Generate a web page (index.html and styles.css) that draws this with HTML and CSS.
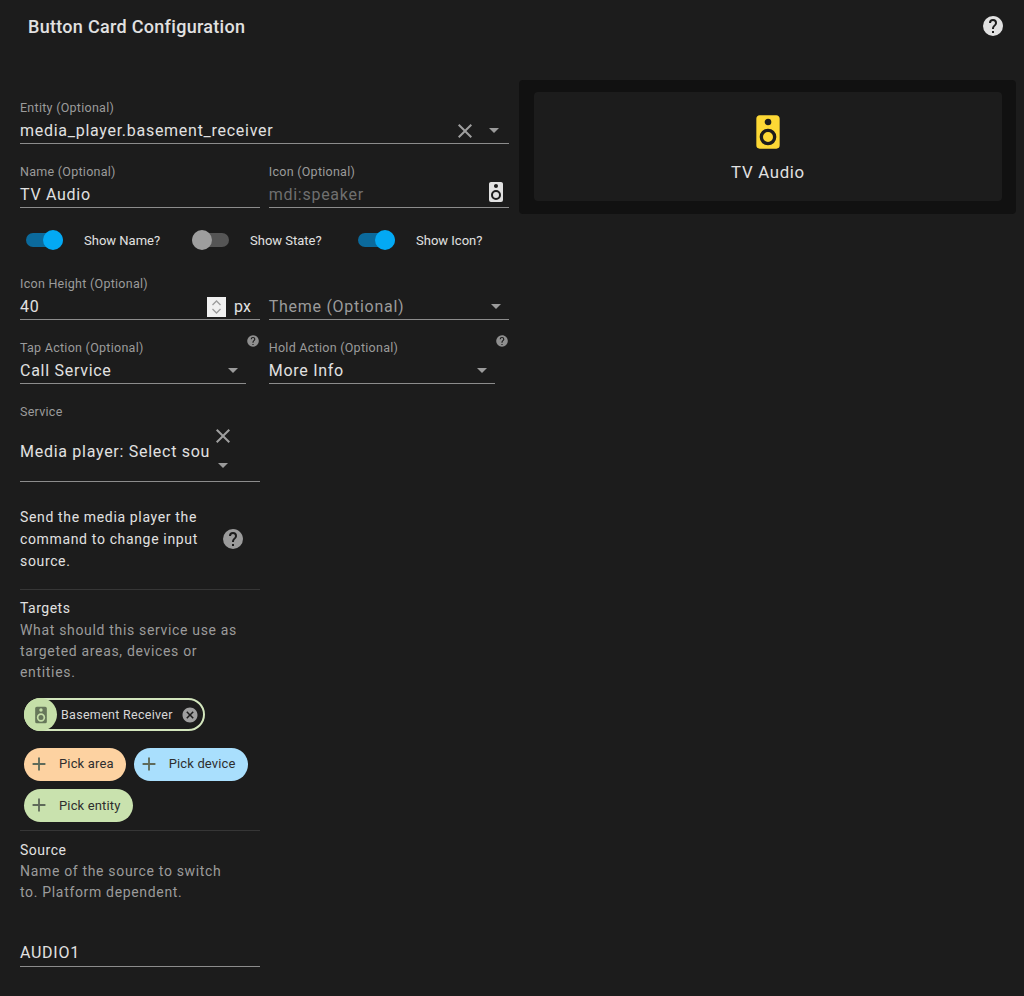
FILE: index.html
```html
<!DOCTYPE html>
<html lang="en">
<head>
<meta charset="utf-8">
<title>Button Card Configuration</title>
<link rel="stylesheet" href="styles.css">
</head>
<body>
<svg class="defs" width="0" height="0" aria-hidden="true">
  <defs>
    <path id="speaker" d="M12,12A3,3 0 0,0 9,15A3,3 0 0,0 12,18A3,3 0 0,0 15,15A3,3 0 0,0 12,12M12,20A5,5 0 0,1 7,15A5,5 0 0,1 12,10A5,5 0 0,1 17,15A5,5 0 0,1 12,20M12,4A2,2 0 0,1 14,6A2,2 0 0,1 12,8C10.89,8 10,7.1 10,6C10,4.89 10.89,4 12,4M17,2H7C5.89,2 5,2.89 5,4V20A2,2 0 0,0 7,22H17A2,2 0 0,0 19,20V4C19,2.89 18.1,2 17,2Z"/>
    <path id="help" d="M15.07,11.25L14.17,12.17C13.45,12.89 13,13.5 13,15H11V14.5C11,13.39 11.45,12.39 12.17,11.67L13.41,10.41C13.78,10.05 14,9.55 14,9C14,7.89 13.1,7 12,7A2,2 0 0,0 10,9H8A4,4 0 0,1 12,5A4,4 0 0,1 16,9C16,9.88 15.64,10.67 15.07,11.25M13,19H11V17H13M12,2A10,10 0 0,0 2,12A10,10 0 0,0 12,22A10,10 0 0,0 22,12C22,6.47 17.5,2 12,2Z"/>
    <path id="close" d="M19,6.41L17.59,5L12,10.59L6.41,5L5,6.41L10.59,12L5,17.59L6.41,19L12,13.41L17.59,19L19,17.59L13.41,12L19,6.41Z"/>
    <path id="plus" d="M19,13H13V19H11V13H5V11H11V5H13V11H19V13Z"/>
    <path id="close-circle" d="M12,2C17.53,2 22,6.47 22,12C22,17.53 17.53,22 12,22C6.47,22 2,17.53 2,12C2,6.47 6.47,2 12,2M15.59,7L12,10.59L8.41,7L7,8.41L10.59,12L7,15.59L8.41,17L12,13.41L15.59,17L17,15.59L13.41,12L17,8.41L15.59,7Z"/>
  </defs>
</svg>
<header class="top">
  <h1>Button Card Configuration</h1>
  <svg class="top-help" viewBox="0 0 24 24"><use href="#help"/></svg>
</header>
<main class="layout">
  <section class="form">
    <div class="field">
      <span class="label">Entity (Optional)</span>
      <div class="value-row">
        <span class="value grow">media_player.basement_receiver</span>
        <svg class="x-icon" viewBox="0 0 24 24"><use href="#close"/></svg>
        <span class="caret entity-caret"></span>
      </div>
    </div>
    <div class="row">
      <div class="field">
        <span class="label">Name (Optional)</span>
        <div class="value-row"><span class="value grow">TV Audio</span></div>
      </div>
      <div class="field">
        <span class="label">Icon (Optional)</span>
        <div class="value-row">
          <span class="value grow placeholder">mdi:speaker</span>
          <svg class="field-icon" viewBox="0 0 24 24"><use href="#speaker"/></svg>
        </div>
      </div>
    </div>
    <div class="switches">
      <div class="switch-item"><span class="switch on"><i></i></span><span class="switch-label">Show Name?</span></div>
      <div class="switch-item"><span class="switch"><i></i></span><span class="switch-label">Show State?</span></div>
      <div class="switch-item"><span class="switch on"><i></i></span><span class="switch-label">Show Icon?</span></div>
    </div>
    <div class="row">
      <div class="field">
        <span class="label">Icon Height (Optional)</span>
        <div class="value-row">
          <span class="value grow">40</span>
          <span class="spinner">
            <svg viewBox="0 0 18 20"><path d="M5 8l4-4 4 4M5 12l4 4 4-4"/></svg>
          </span>
          <span class="value unit">px</span>
        </div>
      </div>
      <div class="field">
        <span class="label"></span>
        <div class="value-row">
          <span class="value grow muted">Theme (Optional)</span>
          <span class="caret theme-caret"></span>
        </div>
      </div>
    </div>
    <div class="row">
      <div class="action">
        <div class="field short">
          <span class="label">Tap Action (Optional)</span>
          <div class="value-row"><span class="value grow">Call Service</span><span class="caret"></span></div>
        </div>
        <svg class="action-help" viewBox="0 0 24 24"><use href="#help"/></svg>
      </div>
      <div class="action">
        <div class="field short">
          <span class="label">Hold Action (Optional)</span>
          <div class="value-row"><span class="value grow">More Info</span><span class="caret"></span></div>
        </div>
        <svg class="action-help" viewBox="0 0 24 24"><use href="#help"/></svg>
      </div>
    </div>
    <div class="narrow">
      <div class="service">
        <span class="label">Service</span>
        <div class="service-row">
          <span class="value service-value">Media player: Select sou</span>
          <div class="service-icons">
            <svg class="x-icon" viewBox="0 0 24 24"><use href="#close"/></svg>
            <span class="caret"></span>
          </div>
        </div>
      </div>
      <div class="desc">
        <p>Send the media player the command to change input source.</p>
        <svg class="desc-help" viewBox="0 0 24 24"><use href="#help"/></svg>
      </div>
      <div class="block targets">
        <div class="block-title">Targets</div>
        <p class="block-sub">What should this service use as targeted areas, devices or entities.</p>
        <div class="chip-selected">
          <span class="chip-avatar"><svg viewBox="0 0 24 24"><use href="#speaker"/></svg></span>
          <span class="chip-text">Basement Receiver</span>
          <svg class="chip-remove" viewBox="0 0 24 24"><use href="#close-circle"/></svg>
        </div>
        <div class="picks">
          <span class="pick area"><svg viewBox="0 0 24 24"><use href="#plus"/></svg>Pick area</span>
          <span class="pick device"><svg viewBox="0 0 24 24"><use href="#plus"/></svg>Pick device</span>
          <span class="pick entity"><svg viewBox="0 0 24 24"><use href="#plus"/></svg>Pick entity</span>
        </div>
      </div>
      <div class="block source">
        <div class="block-title">Source</div>
        <p class="block-sub">Name of the source to switch to. Platform dependent.</p>
        <div class="source-input"><span class="value">AUDIO1</span></div>
      </div>
    </div>
  </section>
  <aside class="preview">
    <div class="card">
      <svg class="card-icon" viewBox="0 0 24 24"><use href="#speaker"/></svg>
      <span class="card-name">TV Audio</span>
    </div>
  </aside>
</main>
</body>
</html>
```
FILE: styles.css
```css
* { box-sizing: border-box; }
html, body { margin: 0; padding: 0; }
body {
  width: 1024px;
  height: 996px;
  overflow: hidden;
  background: #1c1c1c;
  color: #e1e1e1;
  font-family: Roboto, "Liberation Sans", sans-serif;
}
p { margin: 0; }
.defs { position: absolute; }

.top {
  height: 52px;
  display: flex;
  align-items: center;
  justify-content: space-between;
  padding: 0 19px 0 28px;
}
.top h1 {
  margin: 0;
  font-size: 18px;
  font-weight: 500;
  letter-spacing: 0.3px;
  color: #e1e1e1;
}
.top-help { width: 24px; height: 24px; fill: #e1e1e1; }

.layout {
  display: flex;
  align-items: flex-start;
  gap: 10px;
  padding: 28px 8px 0 20px;
}
.form { width: 489px; flex: none; padding-top: 16px; }

.row { display: flex; gap: 8.5px; margin-top: 16px; }
.row > * { flex: 1 1 0; min-width: 0; }

.field {
  height: 48px;
  border-bottom: 1px solid #8c8c8c;
  display: flex;
  flex-direction: column;
}
.label {
  display: block;
  height: 24px;
  font-size: 12.5px;
  line-height: 24px;
  letter-spacing: 0.27px;
  color: #9b9b9b;
}
.value-row { display: flex; align-items: center; height: 23px; margin-top: -1px; }
.value {
  font-size: 16px;
  line-height: 23px;
  letter-spacing: 0.72px;
  color: #e1e1e1;
  white-space: nowrap;
}
.grow { flex: 1 1 auto; }
.placeholder { color: #6f6f6f; }
.muted { color: #9b9b9b; }
.unit { margin: 0 9px 0 8px; letter-spacing: 0.2px; }

.x-icon { width: 24px; height: 24px; fill: #9f9f9f; flex: none; }
.caret {
  width: 0; height: 0; flex: none;
  border-left: 5px solid transparent;
  border-right: 5px solid transparent;
  border-top: 5px solid #9b9b9b;
  margin-right: 8px;
}
.entity-caret { margin: 0 10px 0 12px; }
.theme-caret { margin-right: 8px; }
.field-icon { width: 24px; height: 24px; fill: #e1e1e1; flex: none; margin: 0 1px 5px 0; }

.spinner {
  width: 19px; height: 20px; flex: none;
  background: #f0f0f0;
  display: flex;
}
.spinner svg { width: 19px; height: 20px; fill: none; stroke: #9c9c9c; stroke-width: 1.3; }

.switches { height: 64px; display: flex; align-items: center; padding-left: 6px; }
.switches + .row { margin-top: 0; }
.switch-item { display: flex; align-items: center; width: 166px; flex: none; }
.switch {
  position: relative;
  width: 37px; height: 14px;
  border-radius: 7px;
  background: #555;
  flex: none;
}
.switch i {
  position: absolute;
  left: 0; top: -3px;
  width: 20px; height: 20px;
  border-radius: 50%;
  background: #9e9e9e;
}
.switch.on { background: #0b6a9c; }
.switch.on i { left: auto; right: 0; background: #03a9f4; }
.switch-label { margin-left: 21px; font-size: 13px; letter-spacing: 0; color: #e1e1e1; }

.action { position: relative; }
.short { margin-right: 14.5px; }
.action-help { position: absolute; right: 0; top: -2px; width: 14px; height: 14px; fill: #8f8f8f; }

.narrow { width: 240px; margin-top: 16px; }
.service { border-bottom: 1px solid #8c8c8c; height: 82px; }
.service-row { display: flex; height: 57px; align-items: center; }
.service-value { overflow: hidden; width: 190px; flex: none; margin-bottom: 2px; }
.service-icons {
  width: 26px;
  display: flex;
  flex-direction: column;
  align-items: center;
  align-self: flex-start;
}
.service-icons .caret { margin: 15px 0 0; }

.desc {
  display: flex;
  align-items: center;
  justify-content: space-between;
  padding: 24px 15px 17px 0;
  border-bottom: 1px solid #363636;
}
.desc p { width: 190px; font-size: 14px; line-height: 22px; letter-spacing: 0.65px; color: #e1e1e1; }
.desc-help { width: 24px; height: 24px; fill: #9b9b9b; flex: none; }

.block { padding-top: 8px; }
.source { padding-top: 9px; }
.block-title { font-size: 14px; line-height: 21px; letter-spacing: 0.5px; color: #e1e1e1; }
.targets .block-title { margin-bottom: 1px; }
.block-sub { width: 220px; font-size: 14px; line-height: 21px; letter-spacing: 0.67px; color: #9b9b9b; }

.chip-selected {
  width: 181px; height: 33px;
  margin: 15px 0 0 4px;
  border: 2px solid #d3e6bd;
  border-radius: 17px;
  display: flex;
  align-items: center;
}
.chip-avatar {
  width: 33px; height: 33px;
  margin-left: -2px;
  border-radius: 50%;
  background: #c5dfa8;
  display: flex;
  align-items: center;
  justify-content: center;
  flex: none;
}
.chip-avatar svg { width: 20px; height: 20px; fill: #66775a; }
.chip-text { margin: 0 0 1px 4px; font-size: 12.5px; letter-spacing: 0.3px; color: #d8d8d8; white-space: nowrap; }
.chip-remove { width: 18px; height: 18px; margin-left: 8px; fill: #a0a0a0; flex: none; }

.picks { display: flex; flex-wrap: wrap; gap: 8.5px 8px; margin-top: 16.5px; padding: 0 0 8px 4px; border-bottom: 1px solid #363636; }
.pick {
  height: 33px;
  border-radius: 16.5px;
  display: flex;
  align-items: center;
  padding: 0 12px 1px 4px;
  font-size: 13px;
  letter-spacing: 0.15px;
  color: #2e2e2e;
}
.pick svg { width: 22px; height: 22px; fill: #5e6a5a; margin-right: 9px; }
.pick.area { background: #fdd2a1; }
.pick.device { background: #a9dffd; }
.pick.entity { background: #c9e2ae; }

.source-input { margin-top: 38px; height: 26px; border-bottom: 1px solid #8c8c8c; }

.preview {
  width: 497px;
  height: 134px;
  padding: 12px 14px 12px 15px;
  background: #111;
  border-radius: 4px;
}
.card {
  height: 109px;
  background: #1c1c1c;
  border-radius: 4px;
  display: flex;
  flex-direction: column;
  align-items: center;
  padding-top: 20px;
}
.card-icon { width: 40px; height: 40px; fill: #fdd835; }
.card-name { margin-top: 8px; font-size: 16.8px; line-height: 24px; letter-spacing: 0.7px; color: #e1e1e1; }
```
